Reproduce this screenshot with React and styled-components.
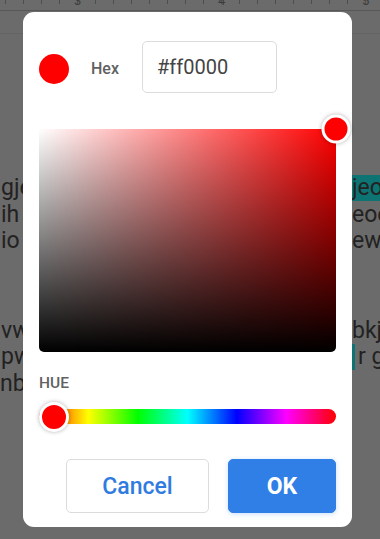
import React from "react";
import styled, { createGlobalStyle } from "styled-components";

const GlobalStyle = createGlobalStyle`
    html, body {
        margin: 0;
        padding: 0;
        background: #6b6b6b;
        font-family: Roboto, "Liberation Sans", Arial, sans-serif;
    }
    * {
        box-sizing: border-box;
    }
`;

const Screen = styled.div`
    position: relative;
    width: 380px;
    height: 539px;
    overflow: hidden;
    background: #6b6b6b;
`;

const Ruler = styled.div`
    height: 11px;
    border-bottom: 1px solid #575757;
    background-image: repeating-linear-gradient(
        to right,
        transparent 0 5px,
        #4e4e4e 5px 6px,
        transparent 6px 18px
    );
    background-size: 100% 4px;
    background-repeat: no-repeat;
    display: flex;
    overflow: hidden;
    .num {
        position: relative;
        top: -6px;
        font-size: 13px;
        line-height: 14px;
        color: #3c3c3c;
        width: 144px;
        flex: none;
    }
`;

const ToolStrip = styled.div`
    height: 23px;
    border-bottom: 1px solid #646464;
`;

const Doc = styled.div`
    padding-top: 141px;
    font-size: 23px;
    line-height: 26.5px;
    color: #222;
`;

const Paragraph = styled.div`
    margin-bottom: ${(p) => p.gap || 0}px;
`;

const Line = styled.div`
    display: grid;
    grid-template-columns: 350px 1fr;
    white-space: nowrap;
    overflow: hidden;
    .left {
        padding-left: ${(p) => p.indent || 1}px;
    }
    .right {
        padding-left: 2px;
    }
    mark {
        background: #0e7373;
        color: inherit;
    }
`;

const Highlight = styled.span`
    display: inline-block;
    width: ${(p) => p.w}px;
    height: 26px;
    vertical-align: top;
    margin: 0 3px 0 -2px;
    background: #0e7373;
`;

const Backdrop = styled.div`
    position: absolute;
    inset: 0;
    display: flex;
    align-items: center;
    padding: 0 28px 0 23px;
`;

const Dialog = styled.div`
    width: 329px;
    height: 515px;
    background: #fff;
    border-radius: 11px;
    padding: 28px 16px 14px 16px;
    display: flex;
    flex-direction: column;
`;

const HeaderRow = styled.div`
    display: flex;
    align-items: center;
    height: 53px;
`;

const Swatch = styled.div`
    width: 30px;
    height: 30px;
    border-radius: 50%;
    background: ${(p) => p.color};
    margin-top: 4px;
    margin-right: 22px;
`;

const Label = styled.span`
    font-size: 16px;
    font-weight: 500;
    color: #616161;
    margin-top: ${(p) => p.mt || 0}px;
`;

const HexLabel = styled(Label)`
    width: 51px;
`;

const HexInput = styled.input`
    width: 135px;
    height: 52px;
    border: 1px solid #dcdcdc;
    border-radius: 5px;
    padding: 0 14px;
    font-family: inherit;
    font-size: 20px;
    color: #444;
    outline: none;
`;

const SatArea = styled.div`
    position: relative;
    margin-top: 36px;
    height: 223px;
    border-radius: 3px 3px 5px 5px;
    background:
        linear-gradient(to top, #000, rgba(0, 0, 0, 0)),
        linear-gradient(to right, #fff, ${(p) => p.hue});
`;

const Thumb = styled.div`
    position: absolute;
    left: ${(p) => p.x}%;
    top: ${(p) => p.y}%;
    width: ${(p) => p.size}px;
    height: ${(p) => p.size}px;
    border-radius: 50%;
    background: ${(p) => p.color};
    border: 3px solid #fff;
    box-shadow: 0 0 4px rgba(0, 0, 0, 0.3);
    transform: translate(-50%, -50%);
`;

const HueLabel = styled(Label)`
    display: block;
    margin-top: 22px;
    line-height: 18px;
    font-size: 15.5px;
`;

const HueTrack = styled.div`
    position: relative;
    margin-top: 17px;
    height: 15px;
    border-radius: 8px;
    background: linear-gradient(
        to right,
        #f00 0%,
        #ff0 16.6%,
        #0f0 33.3%,
        #0ff 50%,
        #00f 66.6%,
        #f0f 83.3%,
        #f00 100%
    );
    ${Thumb} {
        transform: translate(0, -50%);
        top: 50%;
    }
`;

const Actions = styled.div`
    margin-top: auto;
    display: flex;
    justify-content: flex-end;
    gap: 19px;
`;

const Button = styled.button`
    height: 54px;
    width: ${(p) => p.w}px;
    border-radius: 5px;
    font-family: inherit;
    font-size: 23px;
    cursor: pointer;
    border: 1px solid ${(p) => (p.primary ? "#2f7fe6" : "#dcdcdc")};
    background: ${(p) => (p.primary ? "#2f7fe6" : "#fff")};
    color: ${(p) => (p.primary ? "#fff" : "#2f7be0")};
    font-weight: ${(p) => (p.primary ? 700 : 500)};
    box-shadow: ${(p) => (p.primary ? "0 1px 5px rgba(47, 127, 230, 0.25)" : "none")};
`;

const paragraphs = [
    {
        gap: 63,
        lines: [
            { left: "gje", right: "jeo", mark: true },
            { left: "ih", right: "eoe" },
            { left: "io", right: "ewj" },
        ],
    },
    {
        gap: 0,
        lines: [
            { left: "vw", right: "bkjl" },
            { left: "pw", right: "r g", pre: true },
            { left: "nbo", right: "", indent: -3 },
        ],
    },
];

export default function App() {
    const color = "#ff0000";
    return (
        <>
            <GlobalStyle />
            <Screen>
                <Ruler>
                    <span className="num" style={{ width: 74 }}></span>
                    <span className="num">3</span>
                    <span className="num">4</span>
                    <span className="num">5</span>
                </Ruler>
                <ToolStrip />
                <Doc>
                    {paragraphs.map((p, i) => (
                        <Paragraph gap={p.gap} key={i}>
                            {p.lines.map((l, j) => (
                                <Line indent={l.indent} key={j}>
                                    <span className="left">{l.left}</span>
                                    <span className="right">
                                        {l.mark ? (
                                            <mark>{l.right + "kdl"}</mark>
                                        ) : l.pre ? (
                                            <>
                                                <Highlight w={5} />
                                                {l.right}
                                            </>
                                        ) : (
                                            l.right
                                        )}
                                    </span>
                                </Line>
                            ))}
                        </Paragraph>
                    ))}
                </Doc>
                <Backdrop>
                    <Dialog>
                        <HeaderRow>
                            <Swatch color={color} />
                            <HexLabel mt={3}>Hex</HexLabel>
                            <HexInput defaultValue={color} />
                        </HeaderRow>
                        <SatArea hue={color}>
                            <Thumb x={100} y={0} size={29} color={color} />
                        </SatArea>
                        <HueLabel>HUE</HueLabel>
                        <HueTrack>
                            <Thumb x={0} size={30} color={color} />
                        </HueTrack>
                        <Actions>
                            <Button w={143}>Cancel</Button>
                            <Button w={108} primary>OK</Button>
                        </Actions>
                    </Dialog>
                </Backdrop>
            </Screen>
        </>
    );
}
